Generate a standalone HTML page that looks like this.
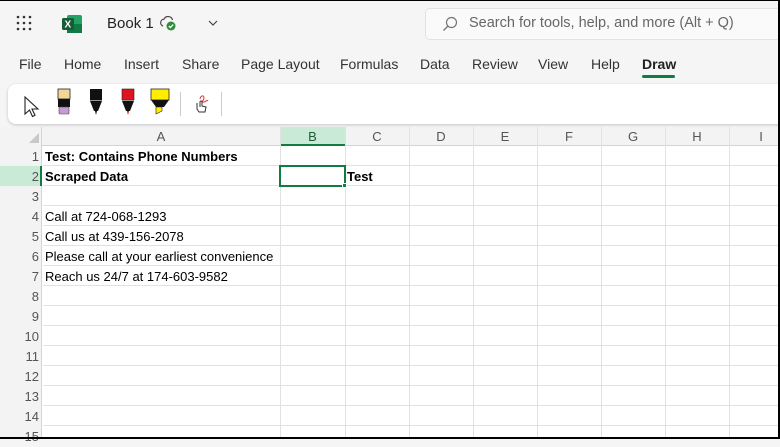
<!DOCTYPE html>
<html><head><meta charset="utf-8"><style>
*{margin:0;padding:0;box-sizing:border-box}
body{width:780px;height:439px;overflow:hidden;background:#f5f5f5;font-family:"Liberation Sans",sans-serif;position:relative}
.a{position:absolute}
.menu span{position:absolute;top:56px;font-size:14px;color:#333}
.grid{left:0;top:127px;width:780px;height:312px;background:#fff}
.hl{position:absolute;left:0;width:780px;height:1px;background:#e1e1e1}
.vl{position:absolute;top:127px;width:1px;height:312px;background:#e1e1e1}
.ch{position:absolute;top:127px;height:19px;font-size:13px;color:#555;text-align:center;line-height:19px}
.rh{position:absolute;left:0;width:39px;text-align:right;font-size:13px;color:#555;height:20px;line-height:21px}
.c{position:absolute;left:45px;font-size:13px;color:#000;line-height:21px;white-space:nowrap}
</style></head><body>
<svg class="a" style="left:16px;top:15px" width="16" height="16"><g fill="#333"><circle cx="2" cy="2" r="1.3"/><circle cx="8" cy="2" r="1.3"/><circle cx="14" cy="2" r="1.3"/><circle cx="2" cy="8" r="1.3"/><circle cx="8" cy="8" r="1.3"/><circle cx="14" cy="8" r="1.3"/><circle cx="2" cy="14" r="1.3"/><circle cx="8" cy="14" r="1.3"/><circle cx="14" cy="14" r="1.3"/></g></svg>
<svg class="a" style="left:61px;top:14px" width="22" height="20"><rect x="6" y="1" width="15" height="18" rx="2" fill="#21a366"/><rect x="6" y="10" width="15" height="9" fill="#107c41"/><rect x="1" y="4" width="12" height="12" rx="1.5" fill="#185c37"/><text x="3.5" y="13.5" font-size="10" font-weight="bold" fill="#fff" font-family="Liberation Sans">X</text></svg>
<div class="a" style="left:107px;top:15px;font-size:15px;color:#222">Book 1</div>
<svg class="a" style="left:159px;top:15px" width="20" height="18"><path d="M4 11a3.5 3.5 0 0 1 1-6.8A4.5 4.5 0 0 1 13.5 5" fill="none" stroke="#444" stroke-width="1.2"/><circle cx="12" cy="11" r="4.5" fill="#2e8b3a"/><path d="M9.8 11l1.6 1.6 2.8-3" stroke="#fff" fill="none" stroke-width="1.3"/></svg>
<svg class="a" style="left:208px;top:20px" width="10" height="6"><path d="M1 1l4 4 4-4" fill="none" stroke="#444" stroke-width="1.2"/></svg>
<div class="a" style="left:425px;top:8px;width:360px;height:32px;background:#fafafa;border:1px solid #e3e3e3;border-radius:5px"></div>
<svg class="a" style="left:442px;top:16px" width="16" height="16"><circle cx="9.5" cy="6.5" r="5" fill="none" stroke="#777" stroke-width="1.2"/><path d="M6 10L1.5 14.5" stroke="#777" stroke-width="1.3"/></svg>
<div class="a" style="left:469px;top:15px;font-size:14.5px;color:#666">Search for tools, help, and more (Alt + Q)</div>
<div class="menu">
<span style="left:19px">File</span><span style="left:64px">Home</span><span style="left:124px">Insert</span><span style="left:182px">Share</span><span style="left:241px">Page Layout</span><span style="left:340px">Formulas</span><span style="left:420px">Data</span><span style="left:472px">Review</span><span style="left:538px">View</span><span style="left:591px">Help</span><span style="left:642px;font-weight:bold;color:#222">Draw</span>
</div>
<div class="a" style="left:642px;top:75px;width:33px;height:3px;background:#107c41;border-radius:2px"></div>
<div class="a" style="left:8px;top:84px;width:790px;height:40px;background:#fff;border-radius:8px;box-shadow:0 1px 3px rgba(0,0,0,.2)"></div>
<svg class="a" style="left:24px;top:96px" width="16" height="22"><path d="M1 1v17l4.5-4 3 6.5 2.5-1.2-3-6.3h6z" fill="#fff" stroke="#222" stroke-width="1.1"/></svg>
<svg class="a" style="left:56px;top:88px" width="16" height="30"><rect x="2" y="1" width="12" height="10" fill="#f5d49a" stroke="#222" stroke-width=".8"/><rect x="2" y="11" width="12" height="8" fill="#111"/><rect x="3" y="19" width="10" height="7" rx="1" fill="#c79ad8" stroke="#444" stroke-width=".6"/></svg>
<svg class="a" style="left:88px;top:88px" width="16" height="30"><rect x="2" y="1" width="12" height="11" fill="#111"/><rect x="2" y="12" width="12" height="1" fill="#999"/><path d="M2 13h12l-4 10h-4z" fill="#111"/><path d="M7 23h2l-1 4z" fill="#111"/></svg>
<svg class="a" style="left:120px;top:88px" width="16" height="30"><rect x="2" y="1" width="12" height="11" fill="#e0141e" stroke="#222" stroke-width=".6"/><rect x="2" y="12" width="12" height="1" fill="#999"/><path d="M2 13h12l-4 10h-4z" fill="#111"/><path d="M7 23h2l-1 4z" fill="#c00"/></svg>
<svg class="a" style="left:149px;top:88px" width="22" height="30"><rect x="2" y="1" width="18" height="11" fill="#ffee00" stroke="#222" stroke-width=".8"/><path d="M2 12h18l-5 7h-8z" fill="#111"/><path d="M7 19h6v4l-6 3z" fill="#ffee00" stroke="#222" stroke-width=".6"/></svg>
<div class="a" style="left:180px;top:92px;width:1px;height:24px;background:#ccc"></div>
<svg class="a" style="left:192px;top:94px" width="20" height="20"><path d="M8 5c1-4 4-4 4-1s-3 3-1 4 4-3 5-1" fill="none" stroke="#d33" stroke-width="1"/><path d="M5 9v6l2 3h6l1-5-4-1V8a1 1 0 0 0-2 0v5" fill="#fff" stroke="#333" stroke-width="1"/></svg>
<div class="a" style="left:221px;top:92px;width:1px;height:24px;background:#ccc"></div>
<div class="a grid"></div>
<div class="a" style="left:0;top:127px;width:780px;height:19px;background:#f3f3f3;border-bottom:1px solid #d4d4d4"></div>
<div class="a" style="left:0;top:127px;width:42px;height:312px;background:#f3f3f3;border-right:1px solid #d4d4d4"></div>
<svg class="a" style="left:28px;top:132px" width="12" height="12"><path d="M11 1v10H1z" fill="#c8c8c8"/></svg>
<div class="a" style="left:280px;top:127px;width:65px;height:19px;background:#caead8;border-bottom:2px solid #107c41"></div>
<div class="a" style="left:0;top:166px;width:42px;height:20px;background:#caead8;border-right:2px solid #107c41"></div>
<div class="hl" style="top:165px;left:43px"></div><div class="hl" style="top:185px;left:43px"></div><div class="hl" style="top:205px;left:43px"></div><div class="hl" style="top:225px;left:43px"></div><div class="hl" style="top:245px;left:43px"></div><div class="hl" style="top:265px;left:43px"></div><div class="hl" style="top:285px;left:43px"></div><div class="hl" style="top:305px;left:43px"></div><div class="hl" style="top:325px;left:43px"></div><div class="hl" style="top:345px;left:43px"></div><div class="hl" style="top:365px;left:43px"></div><div class="hl" style="top:385px;left:43px"></div><div class="hl" style="top:405px;left:43px"></div><div class="hl" style="top:425px;left:43px"></div>
<div class="vl" style="left:280px"></div><div class="vl" style="left:345px"></div><div class="vl" style="left:409px"></div><div class="vl" style="left:473px"></div><div class="vl" style="left:537px"></div><div class="vl" style="left:601px"></div><div class="vl" style="left:665px"></div><div class="vl" style="left:729px"></div>
<div class="ch" style="left:42px;width:238px">A</div><div class="ch" style="left:280px;width:65px;color:#1e5c36">B</div><div class="ch" style="left:345px;width:64px">C</div><div class="ch" style="left:409px;width:64px">D</div><div class="ch" style="left:473px;width:64px">E</div><div class="ch" style="left:537px;width:64px">F</div><div class="ch" style="left:601px;width:64px">G</div><div class="ch" style="left:665px;width:64px">H</div><div class="ch" style="left:729px;width:64px">I</div>
<div class="rh" style="top:146px">1</div><div class="rh" style="top:166px">2</div><div class="rh" style="top:186px">3</div><div class="rh" style="top:206px">4</div><div class="rh" style="top:226px">5</div><div class="rh" style="top:246px">6</div><div class="rh" style="top:266px">7</div><div class="rh" style="top:286px">8</div><div class="rh" style="top:306px">9</div><div class="rh" style="top:326px">10</div><div class="rh" style="top:346px">11</div><div class="rh" style="top:366px">12</div><div class="rh" style="top:386px">13</div><div class="rh" style="top:406px">14</div><div class="rh" style="top:426px">15</div>
<div class="c" style="top:146px;font-weight:bold">Test: Contains Phone Numbers</div>
<div class="c" style="top:166px;font-weight:bold">Scraped Data</div>
<div class="c" style="top:166px;left:347px;font-weight:bold">Test</div>
<div class="c" style="top:206px">Call at 724-068-1293</div>
<div class="c" style="top:226px">Call us at 439-156-2078</div>
<div class="c" style="top:246px">Please call at your earliest convenience</div>
<div class="c" style="top:266px">Reach us 24/7 at 174-603-9582</div>
<div class="a" style="left:279px;top:165px;width:67px;height:22px;border:2px solid #107c41"></div>
<div class="a" style="left:342px;top:183px;width:5px;height:5px;background:#107c41;border:1px solid #fff"></div>
<div class="a" style="left:0;top:0;width:780px;height:1px;background:#000"></div>
<div class="a" style="left:778px;top:0;width:2px;height:439px;background:#000"></div>
<div class="a" style="left:0;top:437px;width:780px;height:2px;background:#000"></div>
</body></html>
